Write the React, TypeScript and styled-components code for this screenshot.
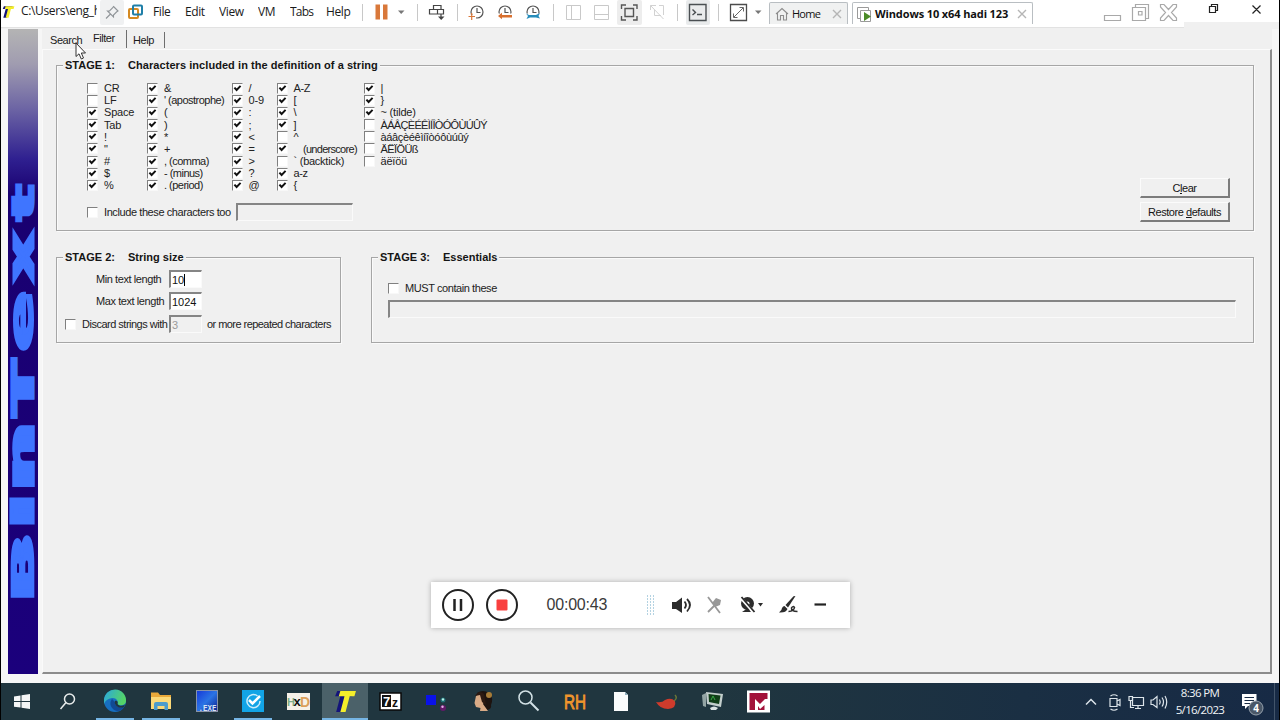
import React from "react";
import styled, { createGlobalStyle } from "styled-components";

const Global = createGlobalStyle`
  * { box-sizing: border-box; }
  body { margin: 0; background: #f0f0f0; overflow: hidden; }
`;

const Screen = styled.div`
  width: 1280px;
  height: 720px;
  display: flex;
  flex-direction: column;
  background: #f0f0f0;
  border-left: 1px solid #000;
  border-right: 1px solid #000;
  overflow: hidden;
  position: relative;
  font-family: "Liberation Sans", Arial, sans-serif;
  color: #1a1a1a;
`;

/* ---------- top bar ---------- */
const TopBar = styled.div`
  height: 29px;
  display: flex;
  align-items: flex-start;
  flex: none;
`;
const MenuStrip = styled.div`
  width: 1183px;
  height: 28px;
  background: #fff;
  border-bottom: 1px solid #e2e2e2;
  display: flex;
  font-family: "Open Sans", "Noto Sans", sans-serif;
  font-size: 12px;
`;
const WindowButtons = styled.div`
  flex: 1;
  height: 22px;
  background: #fff;
  display: flex;
  svg { display: block; }
`;
const Slot = styled.div<{ $w: number; $top?: number; $ls?: number }>`
  width: ${(p) => p.$w}px;
  height: 27px;
  padding-top: ${(p) => p.$top ?? 0}px;
  letter-spacing: ${(p) => p.$ls ?? 0}px;
  flex: none;
  white-space: nowrap;
  overflow: hidden;
  line-height: 16px;
  svg { display: block; }
`;
const PinBox = styled.div`
  width: 24px;
  height: 25px;
  background: #f0f1f2;
  border-radius: 2px;
  flex: none;
  svg { display: block; }
`;
const DocTab = styled.div<{ $w: number; $active?: boolean }>`
  width: ${(p) => p.$w}px;
  height: 22px;
  margin-top: 2px;
  border: 1px solid #b9bec2;
  border-bottom: none;
  border-radius: 2px 2px 0 0;
  background: ${(p) => (p.$active ? "#fff" : "#f0f1f1")};
  display: flex;
  flex: none;
  align-items: center;
  font-size: 11px;
  font-weight: ${(p) => (p.$active ? 700 : 400)};
  color: #111;
  white-space: nowrap;
  svg { flex: none; }
`;
const DocName = styled.span<{ $w: number; $ls: number }>`
  width: ${(p) => p.$w}px;
  letter-spacing: ${(p) => p.$ls}px;
  line-height: 16px;
`;

/* ---------- application body ---------- */
const Body = styled.div`
  flex: 1;
  display: flex;
  padding-left: 7px;
  background: #f6f6f6;
`;
const Banner = styled.div`
  width: 30px;
  height: 645px;
  background: linear-gradient(#b4b4b4 0, #a09cb0 35px, #6c64a4 80px, #2f2090 130px, #190070 165px, #1b007c 100%);
  svg { display: block; overflow: visible; }
`;
const Pages = styled.div`
  width: 1230px;
  margin-left: 4px;
  display: flex;
  flex-direction: column;
  height: 645px;
  background: #f0f0f0;
`;
const TabRow = styled.div`
  height: 20px;
  display: flex;
  font-size: 11px;
  letter-spacing: -0.45px;
  flex: none;
`;
const Tab = styled.div<{ $w: number; $lift?: boolean; $pad: number; $edge?: boolean }>`
  width: ${(p) => p.$w}px;
  height: ${(p) => (p.$lift ? 18 : 16)}px;
  margin-top: ${(p) => (p.$lift ? 1 : 3)}px;
  padding-left: ${(p) => p.$pad}px;
  line-height: 17px;
  border-right: ${(p) => (p.$edge ? "1px solid #6e6e6e" : "none")};
`;
const PageFrame = styled.div`
  flex: 1;
  border-top: 1px solid #fbfbfb;
  border-left: 1px solid #fafafa;
  border-right: 2px solid #8c8c8c;
  border-bottom: 2px solid #8c8c8c;
  padding: 15px 16px 0 13px;
`;
const Group = styled.section<{ $w: number; $h: number }>`
  width: ${(p) => p.$w}px;
  height: ${(p) => p.$h}px;
  border: 1px solid #a6a6a6;
  box-shadow: 1px 1px 0 #fafafa, inset 1px 1px 0 #fafafa;
  flex: none;
`;
const Legend = styled.h2`
  display: flex;
  width: fit-content;
  height: 14px;
  margin: -8px 0 0 6px;
  padding: 0 2px;
  background: #f0f0f0;
  font-size: 11px;
  line-height: 15px;
  font-weight: 700;
  color: #151515;
  white-space: pre;
`;
const LegendPart = styled.span<{ $w?: number; $ls?: number }>`
  width: ${(p) => (p.$w ? p.$w + "px" : "auto")};
  letter-spacing: ${(p) => p.$ls ?? 0}px;
`;
const GroupRow = styled.div`
  display: flex;
  gap: 30px;
  margin-top: 26px;
`;
const Columns = styled.div`
  display: flex;
  margin: 10px 0 0 30px;
  height: 110px;
`;
const Column = styled.div<{ $w: number }>`
  width: ${(p) => p.$w}px;
  flex: none;
`;
const CheckLine = styled.label`
  display: flex;
  align-items: center;
  height: 12.17px;
`;
const Box = styled.span`
  width: 11px;
  height: 11px;
  flex: none;
  background: #fff;
  border-top: 1px solid #808080;
  border-left: 1px solid #808080;
  border-right: 1px solid #f8f8f8;
  border-bottom: 1px solid #f8f8f8;
  svg { display: block; }
`;
const Caption = styled.span<{ $gap?: number; $ls?: number; $w?: number }>`
  margin-left: ${(p) => p.$gap ?? 6}px;
  width: ${(p) => (p.$w ? p.$w + "px" : "auto")};
  font-size: 11px;
  line-height: 12px;
  white-space: pre;
  letter-spacing: ${(p) => p.$ls ?? -0.2}px;
  color: #222;
`;
const Field = styled.div<{ $w: number; $h?: number; $off?: boolean }>`
  width: ${(p) => p.$w}px;
  height: ${(p) => p.$h ?? 18}px;
  flex: none;
  background: ${(p) => (p.$off ? "#f0f0f0" : "#fff")};
  border: 1px solid #fafafa;
  border-top: 2px solid #858585;
  border-left: 2px solid #858585;
  padding-left: 1px;
  font-size: 11px;
  line-height: 16px;
  color: ${(p) => (p.$off ? "#9a9a9a" : "#111")};
  display: flex;
  align-items: center;
`;
const Caret = styled.span`
  width: 1px;
  height: 12px;
  background: #000;
`;
const StageFoot = styled.div`
  display: flex;
  justify-content: space-between;
  padding: 0 23px 0 30px;
`;
const IncludeLine = styled.div`
  display: flex;
  align-items: center;
  height: 18px;
  margin-top: 11px;
`;
const Buttons = styled.div`
  display: flex;
  flex-direction: column;
  gap: 4px;
  margin-top: -14px;
`;
const Button = styled.button`
  width: 90px;
  height: 20px;
  padding: 0;
  border: 1px solid #fbfbfb;
  border-right: 2px solid #7c7c7c;
  border-bottom: 2px solid #7c7c7c;
  background: #f0f0f0;
  font: 11px "Liberation Sans", sans-serif;
  letter-spacing: -0.45px;
  color: #151515;
`;
const FormLine = styled.div<{ $top: number; $pad: number }>`
  display: flex;
  align-items: center;
  height: 18px;
  margin-top: ${(p) => p.$top}px;
  padding-left: ${(p) => p.$pad}px;
`;

/* ---------- recorder ---------- */
const Recorder = styled.div`
  position: absolute;
  left: 430px;
  top: 582px;
  width: 419px;
  height: 46px;
  background: #fff;
  box-shadow: 0 0 5px rgba(0, 0, 0, 0.28);
  display: flex;
  align-items: center;
  padding-left: 11px;
  svg { display: block; flex: none; }
`;
const Round = styled.div`
  width: 32px;
  height: 32px;
  margin-right: 12px;
  border: 2px solid #222;
  border-radius: 50%;
  display: flex;
  align-items: center;
  justify-content: center;
`;
const Timer = styled.div`
  width: 99px;
  margin-left: 16.5px;
  font-size: 16px;
  letter-spacing: -0.2px;
  color: #3a3a3a;
`;
const Pointer = styled.svg`
  position: absolute;
  left: 74px;
  top: 42px;
`;

/* ---------- taskbar ---------- */
const Taskbar = styled.div`
  height: 37px;
  flex: none;
  display: flex;
  background: linear-gradient(90deg, #20363f 0, #20363f 55%, #1a2f43 80%, #172a45 100%);
  font-family: "Open Sans", "Noto Sans", sans-serif;
`;
const Task = styled.div<{ $line?: boolean; $active?: boolean }>`
  width: 46px;
  height: 37px;
  flex: none;
  display: flex;
  flex-direction: column;
  align-items: center;
  justify-content: space-between;
  padding-top: 6px;
  background: ${(p) => (p.$active ? "#4b6169" : "transparent")};
  &:first-child { width: 44.5px; padding-right: 2px; }
  &::after {
    content: "";
    width: ${(p) => (p.$active ? 46 : 38)}px;
    height: 2px;
    background: ${(p) => (p.$line ? "#76b5e4" : "transparent")};
  }
  svg { display: block; }
`;
const Tray = styled.div`
  margin-left: auto;
  width: 198px;
  display: flex;
  svg { display: block; flex: none; }
`;
const Clock = styled.div`
  width: 58px;
  font-size: 11.5px;
  line-height: 17px;
  padding-top: 1px;
  color: #f2f5f7;
  text-align: center;
  letter-spacing: -0.65px;
  white-space: nowrap;
`;

const Check = ({ on }: { on?: boolean }) => (
  <Box>
    {on && (
      <svg width="9" height="9" viewBox="0 0 9 9">
        <path d="M1.400 3.600L3.600 6L7.600 1.900" fill="none" stroke="#111" strokeWidth="2" />
      </svg>
    )}
  </Box>
);

type Item = [string, boolean, number?];
const on = (...s: string[]): Item[] => s.map((t) => [t, true]);
const columns: { w: number; ls?: number; items: Item[] }[] = [
  { w: 60, ls: -0.2, items: [["CR", false], ["LF", false], ...on("Space", "Tab", "!", '"', "#", "$", "%")] },
  { w: 84.5, ls: -0.52, items: on("&", "' (apostrophe)", "(", ")", "*", "+", ", (comma)", "- (minus)", ". (period)") },
  { w: 45, items: on("/", "0-9", ":", ";", "<", "=", ">", "?", "@") },
  {
    w: 87,
    ls: -0.4,
    items: [...on("A-Z", "[", "\\", "]"), ["^", false], ["    (underscore)", true, -0.7], ["` (backtick)", false, -0.25], ...on("a-z", "{")],
  },
  {
    w: 160,
    items: [
      ...on("|", "}", "~ (tilde)"),
      ["ÀÁÂÇÈÉÊÌÍÎÒÓÔÙÚÛÝ", false, -0.68],
      ["àáâçèéêìíîòóôùúûý", false, -0.33],
      ["ÄËÏÖÜß", false, -0.6],
      ["äëïöü", false],
    ],
  },
];

const TLogo = ({ s }: { s: number }) => (
  <svg width={s} height={s} viewBox="0 0 24 24">
    <path d="M5 2H20L19 7H14L10 22H4L8 7H3Z" fill="#14147a" />
    <path d="M8 2H23L21.500 7H17L13 22H8L12 7H6.500Z" fill="#f4ee2a" />
  </svg>
);
const Sep = () => (
  <svg width="1" height="27"><path d="M.5 4V21" stroke="#c8c8c8" /></svg>
);
const ClockFace = ({ children }: { children: React.ReactNode }) => (
  <svg width="20" height="24" viewBox="0 0 20 24" fill="none">
    <circle cx="10" cy="12" r="6" stroke="#555" strokeWidth="1.200" />
    <path d="M10 8V12.500H13.500" stroke="#555" strokeWidth="1.200" />
    {children}
  </svg>
);
const Cross = ({ c = "#b5b5b5" }: { c?: string }) => (
  <svg width="10" height="10" viewBox="0 0 10 10"><path d="M1 1L9 9M9 1L1 9" stroke={c} strokeWidth="1.400" /></svg>
);

const banner: { ch: string; y: number; len: number; size: number; sw: number }[] = [
  { ch: "B", y: 573, len: 69, size: 29, sw: 2.6 },
  { ch: "i", y: 498, len: 32, size: 28, sw: 3.2 },
  { ch: "n", y: 461, len: 67, size: 33, sw: 3.5 },
  { ch: "T", y: 386, len: 54, size: 29, sw: 3.2 },
  { ch: "e", y: 323, len: 62, size: 33, sw: 2 },
  { ch: "x", y: 252, len: 49, size: 33, sw: 3 },
  { ch: "t", y: 190, len: 33, size: 28, sw: 3.4 },
];

export default function App() {
  return (
    <>
      <Global />
      <Screen>
        <TopBar>
          <MenuStrip>
            <Slot $w={20} $top={5}><TLogo s={14} /></Slot>
            <Slot $w={76} $top={3} $ls={-0.35}>C:\Users\eng_h</Slot>
            <Slot $w={3} />
            <PinBox>
              <svg width="24" height="25" fill="none" stroke="#8f9498" strokeWidth="1.100">
                <path d="M13.500 6.500L18 11L16.500 12L13.500 15L13.500 17L7.500 11L9.500 11L12.500 8ZM10.500 14L6 18.500" />
              </svg>
            </PinBox>
            <Slot $w={29}>
              <svg width="24" height="25" fill="none" strokeWidth="2">
                <rect x="5" y="9" width="9" height="9" rx="1" stroke="#d58a22" />
                <rect x="9" y="5.500" width="9" height="9" rx="1" stroke="#1f7fa8" />
              </svg>
            </Slot>
            <Slot $w={32} $top={4} $ls={-0.4}>File</Slot>
            <Slot $w={34} $top={4} $ls={-0.4}>Edit</Slot>
            <Slot $w={39} $top={4} $ls={-0.4}>View</Slot>
            <Slot $w={32} $top={4} $ls={-0.4}>VM</Slot>
            <Slot $w={36} $top={4} $ls={-0.8}>Tabs</Slot>
            <Slot $w={36} $top={4} $ls={-0.4}>Help</Slot>
            <Sep />
            <Slot $w={54}>
              <svg width="50" height="25">
                <path d="M12.500 4.500H17V19.500H12.500ZM20 4.500H24.500V19.500H20Z" fill="#d9783a" />
                <path d="M35 10.500H41.500L38.200 14Z" fill="#777" />
              </svg>
            </Slot>
            <Sep />
            <Slot $w={39}>
              <svg width="39" height="25" fill="none" stroke="#444" strokeWidth="1.200">
                <path d="M15.500 5.500H23V9.500H15.500ZM11.500 9.500H19.500V14H11.500ZM19.500 9.500H25.500V14H19.500M23 14V18" />
                <path d="M20 16.500H26.500L23.200 20Z" fill="#444" stroke="none" />
              </svg>
            </Slot>
            <Sep />
            <Slot $w={9} />
            <Slot $w={28}>
              <ClockFace><path d="M2 15H9V19H5Z" fill="#fff" /><path d="M1.500 16.500H8M4.700 13V20" stroke="#d9783a" strokeWidth="1.200" /></ClockFace>
            </Slot>
            <Slot $w={28}>
              <ClockFace><path d="M2 13.500H18V20H2Z" fill="#fff" /><path d="M3 16L7 12.700V15H17V17.500H7V19.300Z" fill="#d9702f" /></ClockFace>
            </Slot>
            <Slot $w={30}>
              <ClockFace><path d="M2 13.500H18V20H2Z" fill="#fff" /><path d="M3 13.500L6 15H13L17 13L15.500 16L17 18.500L13 17.500H7L3.500 19L5 16Z" fill="#278dbb" /></ClockFace>
            </Slot>
            <Sep />
            <Slot $w={6} />
            <Slot $w={28}>
              <svg width="28" height="25" fill="none" stroke="#c9c9c9"><path d="M6.500 5.500H20.500V19.500H6.500ZM11.500 5.500V19.500" /></svg>
            </Slot>
            <Slot $w={27}>
              <svg width="22" height="25" fill="none" stroke="#c9c9c9"><path d="M6.500 5.500H20.500V19.500H6.500ZM6.500 14.500H20.500" /></svg>
            </Slot>
            <Slot $w={34}>
              <svg width="30" height="25" fill="none" stroke="#555" strokeWidth="1.400">
                <rect x="2" y="0" width="25" height="25" rx="2" fill="#ededed" stroke="none" />
                <path d="M6.500 9V5H11M18 5H22V9M22 16V20H18M11 20H6.500V16M10 8.500H18.500V16.500H10Z" />
              </svg>
            </Slot>
            <Slot $w={28}>
              <svg width="24" height="25" fill="none" stroke="#d2d2d2"><path d="M1.500 10V5.500H7M10 5.500H14.500V15M12 15.500H5.500V10M1.500 5.500L14.500 19" /></svg>
            </Slot>
            <Sep />
            <Slot $w={40}>
              <svg width="34" height="25" fill="none" stroke="#4a4f52" strokeWidth="1.400">
                <rect x="8" y="0" width="24" height="25" rx="2" fill="#e9ebec" stroke="none" />
                <path d="M11.500 4.500H28V20.500H11.500ZM14.500 9.500L17.500 12.500L14.500 15M19 14.500H24" />
              </svg>
            </Slot>
            <Sep />
            <Slot $w={50}>
              <svg width="49" height="25" fill="none" stroke="#4c4c4c" strokeWidth="1.300">
                <path d="M11.500 4.500H27.500V20.500H11.500Z" />
                <path d="M15 17L24 8M20.500 7.500H24.500V11.500M14.500 13.500V17.500H18.500" stroke="#666" strokeWidth="1" />
                <path d="M36 10.500H42.500L39.200 14Z" fill="#777" stroke="none" />
              </svg>
            </Slot>
            <DocTab $w={79}>
              <svg width="22" height="20" fill="none" stroke="#8d8d8d" strokeWidth="1.100"><path d="M6 10L12 4.500L18 10M7.500 9V16H10.500V11.500H13.500V16H16.500V9" /></svg>
              <DocName $w={40} $ls={-0.75}>Home</DocName>
              <Cross />
            </DocTab>
            <Slot $w={4} />
            <DocTab $w={181} $active>
              <svg width="22" height="20" fill="none" stroke="#9a9a9a"><path d="M15.500 6V3.500H4.500V14.500H7M7.500 6.500H17.500V17.500H7.500Z" fill="#fff" /><path d="M11 8V17L18 12.500Z" fill="#4b8b28" stroke="none" /></svg>
              <DocName $w={142} $ls={-0.12}>Windows 10 x64 hadi 123</DocName>
              <Cross />
            </DocTab>
            <Slot $w={69} />
            <Slot $w={80}>
              <svg width="80" height="27" fill="none" stroke="#a9a9a9" strokeWidth="1.200">
                <path d="M2.500 15.500H18.500V20.500H2.500ZM33.500 4.500H46.500V18.500H43.500V20.500H30.500V7.500H33.500ZM33.500 7.500H43.500V18.500M36.500 11.500H40V15H36.500Z" />
                <path d="M58.500 4.500H62L66.500 9.500L71 4.500H74.500V7L69.500 12.500L74.500 18V20.500H71L66.500 15.500L62 20.500H58.500V18L63.500 12.500L58.500 7Z" />
              </svg>
            </Slot>
          </MenuStrip>
          <WindowButtons>
            <svg width="90" height="22" fill="none" stroke="#222" strokeWidth="1.200">
              <path d="M25.500 6.500H31.500V12.500H25.500ZM27.500 6V4.500H33.500V10.500H32M68.500 5.500L76.500 13.500M76.500 5.500L68.500 13.500" />
            </svg>
          </WindowButtons>
        </TopBar>

        <Body>
          <Banner>
            <svg width="30" height="645">
              {banner.map((b) => (
                <text
                  key={b.ch}
                  transform={`translate(25 ${b.y}) rotate(-90)`}
                  textLength={b.len}
                  lengthAdjust="spacingAndGlyphs"
                  fontFamily="DejaVu Sans"
                  fontWeight="700"
                  fontSize={b.size}
                  fill="#3f75ff"
                  stroke="#3f75ff"
                  strokeWidth={b.sw}
                >
                  {b.ch}
                </text>
              ))}
            </svg>
          </Banner>
          <Pages>
            <TabRow>
              <Tab $w={48} $pad={8}>Search</Tab>
              <Tab $w={37} $pad={3} $lift $edge>Filter</Tab>
              <Tab $w={38} $pad={6} $edge>Help</Tab>
            </TabRow>
            <PageFrame>
              <Group $w={1198} $h={166}>
                <Legend>
                  <LegendPart $w={63}>STAGE 1:</LegendPart>
                  <LegendPart $ls={0.06}>Characters included in the definition of a string</LegendPart>
                </Legend>
                <Columns>
                  {columns.map((c, i) => (
                    <Column key={i} $w={c.w}>
                      {c.items.map(([t, v, ls]) => (
                        <CheckLine key={t}>
                          <Check on={v} />
                          <Caption $ls={ls ?? c.ls}>{t}</Caption>
                        </CheckLine>
                      ))}
                    </Column>
                  ))}
                </Columns>
                <StageFoot>
                  <IncludeLine>
                    <Check />
                    <Caption $w={132} $ls={-0.41}>Include these characters too</Caption>
                    <Field $w={117} $off />
                  </IncludeLine>
                  <Buttons>
                    <Button>C<u>l</u>ear</Button>
                    <Button>Restore <u>d</u>efaults</Button>
                  </Buttons>
                </StageFoot>
              </Group>
              <GroupRow>
                <Group $w={285} $h={86}>
                  <Legend>
                    <LegendPart $w={63}>STAGE 2:</LegendPart>
                    <LegendPart>String size</LegendPart>
                  </Legend>
                  <FormLine $top={6} $pad={39}>
                    <Caption $gap={0} $w={73} $ls={-0.42}>Min text length</Caption>
                    <Field $w={33}>10<Caret /></Field>
                  </FormLine>
                  <FormLine $top={4} $pad={39}>
                    <Caption $gap={0} $w={73} $ls={-0.42}>Max text length</Caption>
                    <Field $w={33}>1024</Field>
                  </FormLine>
                  <FormLine $top={5} $pad={8}>
                    <Check />
                    <Caption $w={87} $ls={-0.5}>Discard strings with</Caption>
                    <Field $w={33} $off>3</Field>
                    <Caption $gap={5} $ls={-0.55}>or more repeated characters</Caption>
                  </FormLine>
                </Group>
                <Group $w={883} $h={86}>
                  <Legend>
                    <LegendPart $w={63}>STAGE 3:</LegendPart>
                    <LegendPart>Essentials</LegendPart>
                  </Legend>
                  <FormLine $top={15} $pad={16}>
                    <Check />
                    <Caption $ls={-0.42}>MUST contain these</Caption>
                  </FormLine>
                  <FormLine $top={3} $pad={16}>
                    <Field $w={848} $off />
                  </FormLine>
                </Group>
              </GroupRow>
            </PageFrame>
          </Pages>
        </Body>

        <Taskbar>
          <Task>
            <svg width="16" height="25"><path d="M0 7.500L6.500 6.500V12H0ZM7.500 6.300L16 5V12H7.500ZM0 13H6.500V18.500L0 17.700ZM7.500 13H16V20L7.500 18.700Z" fill="#f4f6f6" /></svg>
          </Task>
          <Task>
            <svg width="20" height="25" fill="none" stroke="#e8ecec" strokeWidth="1.500"><circle cx="10.500" cy="10" r="5" /><path d="M7 13.500L1.500 20" /></svg>
          </Task>
          <Task $line>
            <svg width="24" height="25" viewBox="0 0 24 25">
              <defs>
                <linearGradient id="edge" x1="0" y1="0" x2="1" y2="0.300"><stop offset="0" stopColor="#2aa7e0" /><stop offset="1" stopColor="#54d467" /></linearGradient>
              </defs>
              <circle cx="12" cy="12" r="11" fill="#176fc0" />
              <path d="M1 11A11 11 0 0 1 23 12C23 17 16 17 14.500 15C16 12 13 8.500 9 9C5 9.500 2 12 1 15Z" fill="url(#edge)" />
              <path d="M9 10C5 15 9 21 14 22C18 22 20 20 21.500 17.500C16 20 11 16 12 13Z" fill="#114a94" />
              <path d="M12 12C15 11 15 14 14.500 15C16 17 19 17.500 22 15.500L21 18C15 20 11 16 12 12Z" fill="#20363f" />
            </svg>
          </Task>
          <Task $line>
            <svg width="22" height="25"><path d="M1 3.500H8L10 6H21V20H1Z" fill="#e9a93a" /><path d="M1 8H21V20H1Z" fill="#fbd978" /><path d="M4 21V15Q4 13 6 13H16Q18 13 18 15V21H14.500V17H7.500V21Z" fill="#4c9ccc" /></svg>
          </Task>
          <Task>
            <svg width="22" height="25">
              <defs><linearGradient id="exe" x1="0" y1="0" x2="1" y2="1"><stop offset="0" stopColor="#1538d8" /><stop offset=".5" stopColor="#2b74e4" /><stop offset="1" stopColor="#0a1c8a" /></linearGradient></defs>
              <rect x=".5" y="1.500" width="21" height="21" fill="url(#exe)" stroke="#8793a8" />
              <text x="2.500" y="21.500" textLength="18" lengthAdjust="spacingAndGlyphs" fontSize="8.500" fontFamily="Liberation Mono" fontWeight="700" fill="#d6e2f4">.EXE</text>
            </svg>
          </Task>
          <Task $line>
            <svg width="22" height="25" fill="none"><rect y="1" width="22" height="22" fill="#12a4e6" /><path d="M15.500 7A6.500 6.500 0 1 0 18 12" stroke="#c8ecfb" strokeWidth="1.500" /><path d="M7 11L10.500 14.500L18 7" stroke="#fff" strokeWidth="2.500" /></svg>
          </Task>
          <Task>
            <svg width="24" height="25"><rect y="4" width="23" height="17" fill="#f6f1e8" /><g fontFamily="Liberation Sans" fontWeight="700"><text x="0" y="17" fontSize="11" fill="#7fae8a">H</text><text x="13" y="18" fontSize="14" fill="#dca05a">D</text><text x="6.500" y="17" fontSize="13" fill="#111">x</text></g></svg>
          </Task>
          <Task $line $active><TLogo s={25} /></Task>
          <Task>
            <svg width="23" height="25"><rect x="1" y="4" width="21" height="17" fill="#fff" stroke="#080808" strokeWidth="1.500" /><rect x="3" y="6" width="9" height="12" fill="#111" /><g fontFamily="Liberation Sans" fontWeight="700"><text x="4" y="17" fontSize="13" fill="#fff">7</text><text x="13" y="18" fontSize="12" fill="#111">z</text></g></svg>
          </Task>
          <Task>
            <svg width="24" height="25"><rect x="1" y="6" width="10" height="10" fill="#0a12e8" /><circle cx="18" cy="11" r="2.500" fill="#1e6f74" /><circle cx="18" cy="10.500" r="1.200" fill="#b8f0e8" /><circle cx="18" cy="19" r="3" fill="#611a68" /><circle cx="17.500" cy="17.800" r="1.200" fill="#e4b0e8" /></svg>
          </Task>
          <Task>
            <svg width="22" height="25"><path d="M5 4Q11 0 17 4Q22 9 19 16Q20 20 15 21L9 14Z" fill="#1d130f" /><circle cx="17" cy="6" r="3" fill="#a77c38" /><path d="M4 7Q7 4 9 5L11 10Q13 12 11 15L16 22H8L8.500 19L4 18L2.500 14Z" fill="#d9ab86" /><path d="M3 7Q7 0 12 5L14 16L10 13L8 6Z" fill="#2c1a12" /></svg>
          </Task>
          <Task>
            <svg width="24" height="25" fill="none" stroke="#d3e2e6" strokeWidth="1.500"><circle cx="8.500" cy="8.500" r="6.500" /><path d="M13.500 13.500L21.500 21.500" strokeWidth="2" /></svg>
          </Task>
          <Task>
            <svg width="24" height="25"><text x="1" y="20" textLength="22" lengthAdjust="spacingAndGlyphs" fontSize="21" fontFamily="Liberation Sans" fill="#f0962c" stroke="#f0962c" strokeWidth=".9">RH</text></svg>
          </Task>
          <Task>
            <svg width="16" height="25"><path d="M1 3H12L15 6V22H1Z" fill="#fafcfc" /><path d="M12 3L15 6H12Z" fill="#8fb0c0" /></svg>
          </Task>
          <Task>
            <svg width="24" height="25" fill="none"><path d="M1 13Q7 14 10 11Q16 8 20 12Q22 19 13 20Q5 20 1 13Z" fill="#cf3b2c" /><path d="M19 12Q23 9 20 6" stroke="#6a7638" strokeWidth="1.500" /></svg>
          </Task>
          <Task>
            <svg width="24" height="25"><path d="M1 6L5 4V18L2 17Z" fill="#93a4a4" /><path d="M5 3L22 5L20 18L6 15Z" fill="#c3cecc" /><path d="M7.500 5L19.500 6.500L18 15L8 13Z" fill="#103e18" /><path d="M10 11L12 7L14 11" stroke="#37a845" fill="none" /><path d="M9 19Q13 16 17 19L15 21H10Z" fill="#dbe3e2" /></svg>
          </Task>
          <Task>
            <svg width="23" height="25"><rect y="1.500" width="23" height="22" fill="#fff" /><rect x="2.500" y="4" width="18" height="17" fill="#a2123a" /><path d="M8 23V10L13 15L18 10H21V23H17.500V16L13 20L11 17V23Z" fill="#fff" /></svg>
          </Task>
          <Tray>
            <svg width="90" height="37" fill="none" stroke="#dce4ea" strokeWidth="1.200">
              <path d="M5 21.500L10 16.500L15 21.500" strokeWidth="1.500" />
              <path d="M29 15.500H36V23.500H29ZM36 18L39 16.500V22.500L36 21M29.500 13Q33 10.500 36.500 13M29.500 26Q33 28.500 36.500 26" />
              <path d="M51.500 14.500H62.500V22.500H51.500ZM57 22.500V25M54 25.500H60" />
              <path d="M48 13.500H51.500V17.500H48ZM49.500 17.500V24.500H53" />
              <path d="M70 17H72L76 13.500V24.500L72 21.500H70ZM78.500 16.500Q80 19 78.500 21.500M81 14.500Q84 19 81 23.500M84 13Q87.500 19 84 25.500" />
            </svg>
            <Clock>8:36 PM<br />5/16/2023</Clock>
            <svg width="50" height="37">
              <path d="M13 11H27.500V23H19L16 26V23H13Z" fill="#fff" />
              <path d="M15.500 14.500H25M15.500 17.500H25M15.500 20.500H21" stroke="#1a2c45" />
              <circle cx="27" cy="25" r="7" fill="#4a5868" stroke="#95a0ac" />
              <text x="24.200" y="29" fontSize="10" fontFamily="Open Sans" fontWeight="700" fill="#fff">4</text>
              <path d="M45.500 0V37" stroke="#42546a" />
            </svg>
          </Tray>
        </Taskbar>

        <Recorder>
          <Round><svg width="10" height="12"><path d="M1.500 0V12M8 0V12" stroke="#222" strokeWidth="2.500" /></svg></Round>
          <Round><svg width="12" height="12"><rect x=".5" y=".5" width="11" height="11" rx="1" fill="#f9403f" /></svg></Round>
          <Timer>00:00:43</Timer>
          <svg width="25" height="20" stroke="#b4d3e2" fill="none"><path d="M1.500 0V20M4.500 0V20M7.500 0V20" strokeDasharray="2 1" /></svg>
          <svg width="34" height="20" fill="#2c2c2c"><path d="M1 7H5L11 2.500V18L5 14H1Z" /><path d="M13.500 6.500Q16.500 10 13.500 13.500M16 4Q22 10 16 16.500" fill="none" stroke="#2c2c2c" strokeWidth="1.800" /></svg>
          <svg width="34" height="20" fill="#989898"><path d="M7 8L11 3L16 5L15 10L10 12Z" /><path d="M3 17L9 11M3 2L15 18" stroke="#989898" strokeWidth="1.800" /></svg>
          <svg width="39" height="20" fill="#2c2c2c"><ellipse cx="8.500" cy="8.500" rx="6.500" ry="6.500" /><path d="M3 17H12L9 13Z" /><circle cx="8.500" cy="8.500" r="2" fill="#fff" /><path d="M1.500 2.500L15 17.500" stroke="#fff" strokeWidth="3" /><path d="M2.500 2L15.500 17" stroke="#2c2c2c" strokeWidth="1.800" /><path d="M19 8H24L21.500 11.500Z" /></svg>
          <svg width="35" height="20" fill="#2c2c2c"><path d="M17.500 1L15.500 1.200L7.500 10L10 12.500Z" /><path d="M6.500 11L9.500 14Q8 18 1 17.500Q4 15.500 4 13Q5 11 6.500 11Z" /><path d="M10.500 16.500Q16 16 16.500 12.500Q15 10.500 13.500 13Q13 16.500 19.500 16.500" fill="none" stroke="#2c2c2c" strokeWidth="1.500" /></svg>
          <svg width="14" height="20"><path d="M1.500 9.500H13" stroke="#222" strokeWidth="2.200" /></svg>
        </Recorder>

        <Pointer width="13" height="20" viewBox="0 0 13 20">
          <path d="M1 1V14.500L4 11.800L6.300 17L8.500 16L6.300 11H10.500Z" fill="#fff" stroke="#333" strokeWidth="1" />
        </Pointer>
      </Screen>
    </>
  );
}
